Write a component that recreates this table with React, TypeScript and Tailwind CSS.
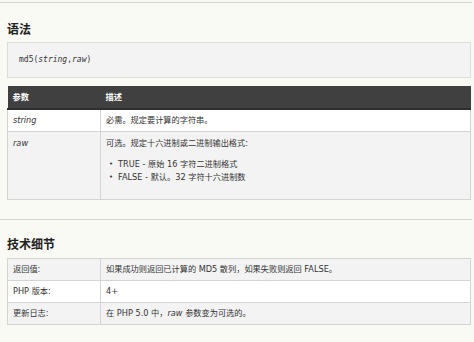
import React from "react";

const font = { fontFamily: '"DejaVu Sans", Verdana, "Noto Sans CJK SC", sans-serif' };

export default function App() {
  return (
    <div className="w-[474px] h-[342px] overflow-hidden bg-[#fafaf5] text-[#333] text-[8.2px]" style={font}>
      <div className="w-[472px] pt-[2px]">
        <div className="border-t border-[#d4d4d4]" />
        <div className="pl-[7px] pr-[1px]">
          <h2 className="mt-[19px] h-[16px] leading-[16px] text-[12px] font-bold text-[#222]">语法</h2>
          <div className="mt-[4px] h-[36px] bg-[#f3f3f3] border border-[#dcdcdc] flex items-center pl-[11px] text-[8px] text-[#333]" style={{ fontFamily: '"DejaVu Sans Mono", "Liberation Mono", monospace' }}>
            md5(<i>string</i>,<i>raw</i>)
          </div>
          <table className="mt-[8px] w-full border-collapse">
            <tbody>
              <tr className="bg-[#404040] text-white font-bold h-[23px] border-b-2 border-[#2e2e2e]">
                <td className="w-[93px] pl-[5px]">参数</td>
                <td className="pl-[5px]">描述</td>
              </tr>
              <tr className="bg-white h-[22px]">
                <td className="pl-[5px] border border-[#d4d4d4] italic">string</td>
                <td className="pl-[5px] border border-[#d4d4d4]">必需。规定要计算的字符串。</td>
              </tr>
              <tr className="bg-[#f3f3f3] h-[68px] align-top">
                <td className="pl-[5px] pt-[5px] border border-[#d4d4d4] italic">raw</td>
                <td className="pl-[5px] pt-[5px] border border-[#d4d4d4]">
                  <div>可选。规定十六进制或二进制输出格式:</div>
                  <ul className="mt-[9px] pl-[3px] leading-[13px]">
                    <li className="flex items-center"><span className="w-[9px] text-[7px]">•</span>TRUE - 原始 16 字符二进制格式</li>
                    <li className="flex items-center"><span className="w-[9px] text-[7px]">•</span>FALSE - 默认。32 字符十六进制数</li>
                  </ul>
                </td>
              </tr>
            </tbody>
          </table>
        </div>
        <div className="mt-[19px] border-t border-[#d4d4d4]" />
        <div className="pl-[7px] pr-[1px]">
          <h2 className="mt-[17px] h-[16px] leading-[16px] text-[12px] font-bold text-[#222]">技术细节</h2>
          <table className="mt-[5px] w-full border-collapse">
            <tbody>
              <tr className="bg-[#f3f3f3] h-[22px]">
                <td className="w-[93px] pl-[5px] border border-[#d4d4d4]">返回值:</td>
                <td className="pl-[5px] border border-[#d4d4d4]">如果成功则返回已计算的 MD5 散列，如果失败则返回 FALSE。</td>
              </tr>
              <tr className="bg-white h-[22px]">
                <td className="pl-[5px] border border-[#d4d4d4]">PHP 版本:</td>
                <td className="pl-[5px] border border-[#d4d4d4]">4+</td>
              </tr>
              <tr className="bg-[#f3f3f3] h-[22px]">
                <td className="pl-[5px] border border-[#d4d4d4]">更新日志:</td>
                <td className="pl-[5px] border border-[#d4d4d4]">在 PHP 5.0 中，<i>raw</i> 参数变为可选的。</td>
              </tr>
            </tbody>
          </table>
        </div>
      </div>
    </div>
  );
}
